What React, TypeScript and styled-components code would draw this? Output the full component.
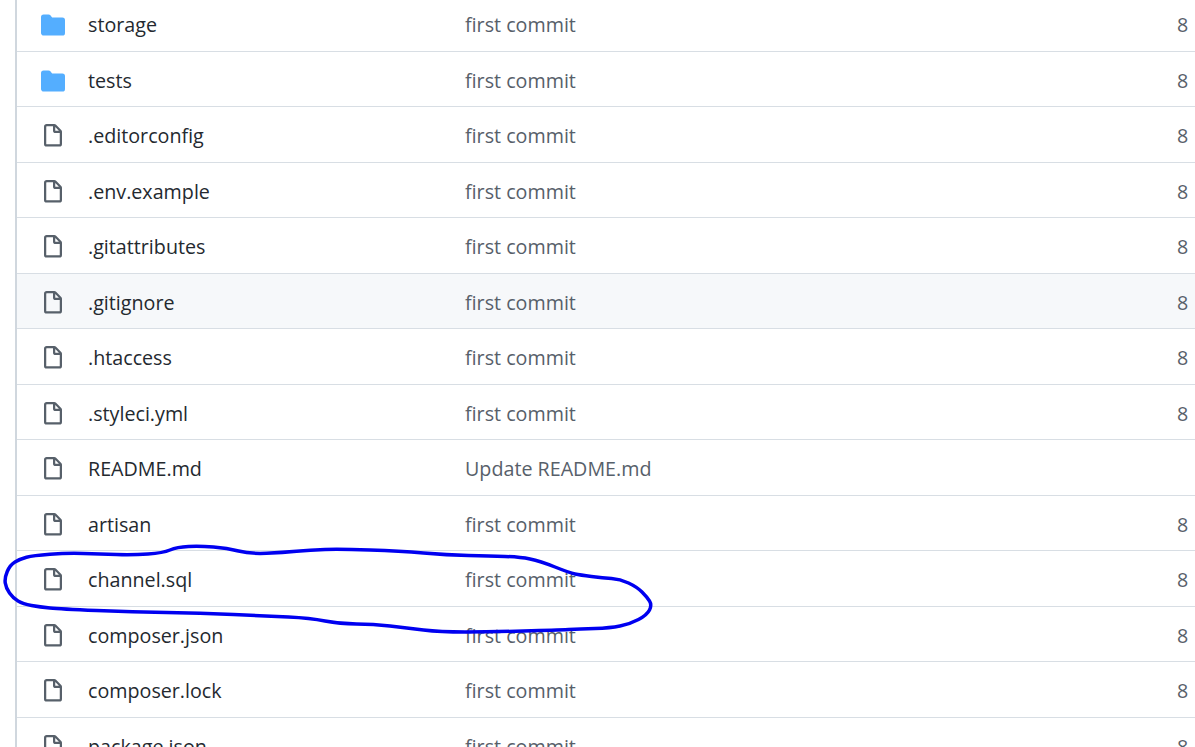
import React from "react";
import styled, { createGlobalStyle } from "styled-components";

const Global = createGlobalStyle`
  html, body { margin: 0; padding: 0; height: 100%; overflow: hidden; background: #fff; }
  body { font-family: "Open Sans", "Noto Sans", sans-serif; }
`;
const Page = styled.div`
  position: relative;
  width: 1195px;
  height: 747px;
  overflow: hidden;
  padding-left: 15px;
  box-sizing: border-box;
`;
const List = styled.div`
  margin-top: -4px;
  border-left: 2px solid #d0d7de;
  height: 780px;
`;
const Row = styled.div<{ $hover?: boolean }>`
  display: grid;
  grid-template-columns: 71px 377px 1fr;
  align-items: center;
  height: 55.5px;
  box-sizing: border-box;
  padding-top: 4px;
  border-bottom: 1px solid #d8dee4;
  background: ${(p) => (p.$hover ? "#f6f8fa" : "#fff")};
  font-size: 19.7px;
  line-height: 28px;
  white-space: nowrap;
  overflow: hidden;
`;
const IconCell = styled.div`
  display: flex;
  padding-left: 24px;
`;
const Name = styled.span`
  color: #24292f;
`;
const Message = styled.span`
  display: inline-block;
  width: 712px;
  color: #57606a;
`;
const Age = styled.span`
  color: #57606a;
`;
const Trailing = styled.div`
  display: flex;
`;
const Ink = styled.svg`
  position: absolute;
  left: 0;
  top: 0;
  pointer-events: none;
`;

const FolderIcon = () => (
  <svg width="24" height="24" viewBox="0 0 16 16" fill="#54aeff" aria-hidden>
    <path d="M1.75 1A1.75 1.75 0 0 0 0 2.75v10.5C0 14.216.784 15 1.75 15h12.5A1.75 1.75 0 0 0 16 13.25v-8.5A1.75 1.75 0 0 0 14.25 3H7.5a.25.25 0 0 1-.2-.1l-.9-1.2C6.07 1.26 5.55 1 5 1H1.75Z" />
  </svg>
);
const FileIcon = () => (
  <svg width="24" height="24" viewBox="0 0 16 16" fill="#57606a" aria-hidden>
    <path
      fillRule="evenodd"
      d="M3.75 1.5a.25.25 0 00-.25.25v11.5c0 .138.112.25.25.25h8.5a.25.25 0 00.25-.25V6H9.75A1.75 1.75 0 018 4.25V1.5H3.75zm5.75.56v2.19c0 .138.112.25.25.25h2.19L9.5 2.06zM2 1.75C2 .784 2.784 0 3.75 0h5.086c.464 0 .909.184 1.237.513l3.414 3.414c.329.328.513.773.513 1.237v8.086A1.75 1.75 0 0112.25 15h-8.5A1.75 1.75 0 012 13.25V1.75z"
    />
  </svg>
);

type Item = { name: string; dir?: boolean; msg?: string; age?: string; hover?: boolean };
const items: Item[] = [
  { name: "storage", dir: true },
  { name: "tests", dir: true },
  { name: ".editorconfig" },
  { name: ".env.example" },
  { name: ".gitattributes" },
  { name: ".gitignore", hover: true },
  { name: ".htaccess" },
  { name: ".styleci.yml" },
  { name: "README.md", msg: "Update README.md", age: "" },
  { name: "artisan" },
  { name: "channel.sql" },
  { name: "composer.json" },
  { name: "composer.lock" },
  { name: "package.json" },
];

const pts: [number, number][] = [
  [4.5, 578], [10, 565], [20, 559], [33, 555.5], [67, 553], [100, 554], [133, 555], [163, 553], [177, 547],
  [200, 546], [227, 548], [250, 554], [283, 552.5], [310, 550], [340, 549], [400, 551], [447, 555],
  [490, 556], [520, 557], [540, 561], [570, 573], [580, 575], [603, 578], [620, 579], [637, 587], [647, 597],
  [652, 605], [647, 615], [630, 624], [610, 628], [580, 629], [557, 630], [490, 632], [440, 632], [407, 628],
  [373, 624], [340, 624], [310, 618], [267, 616], [200, 613], [133, 612], [60, 609], [40, 607], [23, 604],
  [13, 598], [6, 588],
];
const mid = (a: [number, number], b: [number, number]) => `${(a[0] + b[0]) / 2} ${(a[1] + b[1]) / 2}`;
const ink =
  `M${mid(pts[pts.length - 1], pts[0])}` +
  pts.map((p, i) => ` Q${p[0]} ${p[1]} ${mid(p, pts[(i + 1) % pts.length])}`).join("") +
  "Z";

export default function App() {
  return (
    <Page>
      <Global />
      <List>
        {items.map((it) => (
          <Row key={it.name} $hover={it.hover}>
            <IconCell>{it.dir ? <FolderIcon /> : <FileIcon />}</IconCell>
            <Name>{it.name}</Name>
            <Trailing>
              <Message>{it.msg ?? "first commit"}</Message>
              <Age>{it.age ?? "8"}</Age>
            </Trailing>
          </Row>
        ))}
      </List>
      <Ink width="1195" height="747" viewBox="0 0 1195 747" fill="none">
        <path d={ink} stroke="#0000f0" strokeWidth="3.5" strokeLinejoin="round" />
      </Ink>
    </Page>
  );
}
